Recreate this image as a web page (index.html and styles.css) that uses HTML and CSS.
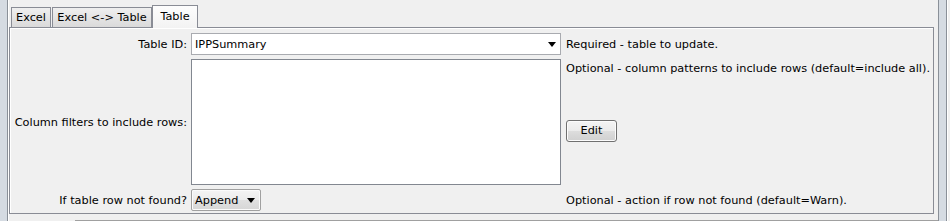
FILE: index.html
```html
<!DOCTYPE html>
<html>
<head>
<meta charset="utf-8">
<link rel="stylesheet" href="styles.css">
</head>
<body>
<div class="frame">
  <div class="edge-left"></div>
  <div class="main">
    <div class="tabs">
      <div class="tab t1">Excel</div>
      <div class="tab t2">Excel &lt;-&gt; Table</div>
      <div class="tab sel">Table</div>
    </div>
    <div class="panel">
      <div class="lbl">Table ID:</div>
      <div class="combo"><span class="combo-text">IPPSummary</span><span class="arrow"></span></div>
      <div class="desc">Required - table to update.</div>

      <div class="lbl">Column filters to include rows:</div>
      <div class="textarea"></div>
      <div class="desc stack">
        <div class="desc-text">Optional - column patterns to include rows (default=include all).</div>
        <div class="btn-wrap"><div class="btn">Edit</div></div>
      </div>

      <div class="lbl">If table row not found?</div>
      <div class="cell-left"><div class="dropbtn"><span>Append</span><span class="arrow"></span></div></div>
      <div class="desc">Optional - action if row not found (default=Warn).</div>
    </div>
    <div class="below"><div class="below-line"></div></div>
  </div>
  <div class="edge-right"></div>
</div>
</body>
</html>
```
FILE: styles.css
```css
html, body {
  margin: 0;
  padding: 0;
  background: #f0f0f0;
}
body {
  width: 950px;
  height: 221px;
  overflow: hidden;
  font-family: "DejaVu Sans", sans-serif;
  font-size: 11.3px;
  color: #000;
}
.frame {
  display: flex;
  height: 221px;
}
.edge-left {
  width: 7px;
  background: #d5dbe2;
  border-right: 1px solid #8a9098;
  box-shadow: 1px 0 0 #ffffff;
  flex: none;
}
.main {
  width: 930px;
  flex: none;
  padding-top: 5px;
  padding-left: 1px;
  box-sizing: border-box;
}
.edge-right {
  width: 7px;
  flex: none;
  background: #d5dbe2;
  border-left: 1px solid #8a9098;
  border-right: 1px solid #8a9098;
  box-shadow: 1px 0 0 #ffffff;
}
.tabs {
  display: flex;
  align-items: flex-end;
  height: 22px;
  padding-left: 1px;
  position: relative;
  z-index: 2;
}
.tab {
  box-sizing: border-box;
  height: 20px;
  border: 1px solid #898c95;
  border-bottom: none;
  background: linear-gradient(#efefef, #dadada);
  text-align: center;
  line-height: 18px;
  padding-top: 1px;
  white-space: nowrap;
}
.t1 { width: 40px; margin-right: 1px; margin-left: 1px; }
.t2 { width: 100px; }
.sel {
  width: 46px;
  height: 23px;
  margin-bottom: -1px;
  background: linear-gradient(#fdfdfd, #f3f3f3);
  line-height: 19px;
  padding-top: 1px;
}
.panel {
  box-sizing: border-box;
  width: 925px;
  height: 187px;
  border: 1px solid #898c95;
  box-shadow: inset 1px 1px 0 #ffffff;
  padding: 5px 0 2px 0;
  display: grid;
  grid-template-columns: 177px 370px 1fr;
  grid-template-rows: 22px 126px 22px;
  column-gap: 4px;
  row-gap: 4px;
  position: relative;
  z-index: 1;
}
.lbl {
  display: flex;
  align-items: center;
  justify-content: flex-end;
  white-space: nowrap;
}
.combo {
  box-sizing: border-box;
  border: 1px solid #a9abb0;
  background: #fff;
  display: flex;
  align-items: center;
  justify-content: space-between;
  padding: 0 4px 0 3px;
}
.arrow {
  width: 0;
  height: 0;
  border-left: 4.5px solid transparent;
  border-right: 4.5px solid transparent;
  border-top: 5px solid #000;
}
.textarea {
  box-sizing: border-box;
  border: 1px solid #828790;
  background: #fff;
}
.desc {
  margin-left: 1px;
  display: flex;
  align-items: center;
  white-space: nowrap;
}
.desc.stack {
  flex-direction: column;
  align-items: flex-start;
}
.desc-text {
  height: 17px;
  line-height: 17px;
  padding-top: 1px;
}
.btn-wrap {
  flex: 1;
  display: flex;
  align-items: center;
}
.btn {
  box-sizing: border-box;
  width: 51px;
  height: 22px;
  border: 1px solid #707070;
  border-radius: 3px;
  background: linear-gradient(#f4f4f4 0%, #ebebeb 50%, #dddddd 51%, #d0d0d0 100%);
  box-shadow: inset 0 0 0 1px #fcfcfc;
  text-align: center;
  line-height: 20px;
}
.cell-left {
  display: flex;
  align-items: stretch;
}
.dropbtn {
  box-sizing: border-box;
  width: 70px;
  border: 1px solid #a0a0a0;
  border-radius: 2px;
  background: linear-gradient(#f4f4f4 0%, #ececec 50%, #e0e0e0 51%, #d6d6d6 100%);
  box-shadow: inset 0 0 0 1px #fbfbfb;
  display: flex;
  align-items: center;
  justify-content: space-between;
  padding: 0 5px 0 3px;
}
.below {
  padding-left: 66px;
  padding-top: 6px;
}
.below-line {
  height: 2px;
  border-top: 1px solid #a0a0a0;
  border-left: 1px solid #a0a0a0;
  background: #f8f8f8;
}
```
